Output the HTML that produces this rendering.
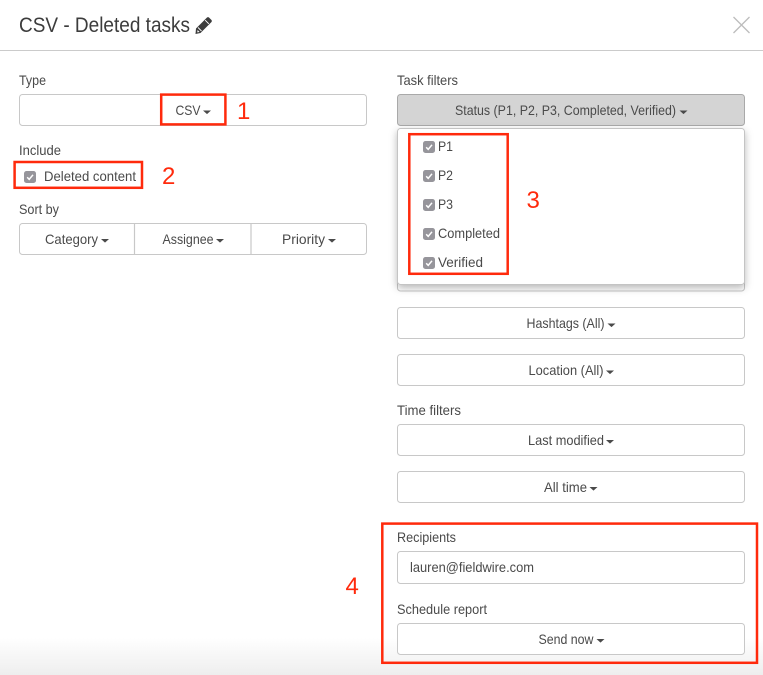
<!DOCTYPE html>
<html>
<head>
<meta charset="utf-8">
<style>
html,body{margin:0;padding:0;background:#fff}
svg{display:block}
text{font-family:"Liberation Sans",sans-serif;font-size:14px;fill:#4a4a4a}
.b{fill:#fff;stroke:#c8c8c8;stroke-width:1}
.r{fill:none;stroke:#ff2a0c;stroke-width:2.5}
.n{font-size:24px;fill:#ff2a0c}
.c{fill:#4a4a4a}
</style>
</head>
<body>
<svg width="763" height="675" viewBox="0 0 763 675" xmlns="http://www.w3.org/2000/svg">
<defs>
<linearGradient id="g" x1="0" y1="0" x2="0" y2="1"><stop offset="0" stop-color="#fff"/><stop offset="1" stop-color="#eeeeee"/></linearGradient>
<filter id="s" x="-5%" y="-5%" width="110%" height="115%"><feDropShadow dx="0" dy="3" stdDeviation="4" flood-color="#000" flood-opacity=".28"/></filter>
<g id="k"><rect x="0" y="0" width="12" height="12" rx="2.5" fill="#96959b"/><path d="M3.2 6.2 L5.2 8.4 L9 3.8" fill="none" stroke="#fff" stroke-width="1.5"/></g>
<path id="t" d="M0 0H8L4 3.6Z" class="c"/>
</defs>
<rect x="0" y="638" width="763" height="37" fill="url(#g)"/>

<!-- header -->
<text x="19" y="32" style="font-size:21px;fill:#3c3c3c" textLength="171" lengthAdjust="spacingAndGlyphs">CSV - Deleted tasks</text>
<path d="M195.5 34 L196 28.5 L207 17.5 Q208 16.8 209 17.5 L211.5 20 Q212.3 21 211.5 22 L200.5 33 Z M197.2 32.4 L199.6 32 L197.6 30 Z" fill="#3c3c3c" fill-rule="evenodd"/>
<path d="M198 27.5 L201.5 31" stroke="#fff" stroke-width=".9"/>
<path d="M205.2 20.2 L208.8 23.8" stroke="#fff" stroke-width=".9"/>
<path d="M733.5 17 L749.5 33 M749.5 17 L733.5 33" stroke="#bdbdbd" stroke-width="1.3" fill="none"/>
<rect x="0" y="50" width="763" height="1" fill="#cbcbcb"/>

<!-- left column -->
<text x="19" y="85" textLength="27" lengthAdjust="spacingAndGlyphs">Type</text>
<rect class="b" x="19.5" y="94.5" width="347" height="31" rx="3"/>
<text x="175.500" y="115" textLength="25" lengthAdjust="spacingAndGlyphs">CSV</text>
<use href="#t" x="203" y="110.500"/>
<rect class="r" x="161.200" y="94.600" width="64.200" height="29.800"/>
<text class="n" x="237" y="119">1</text>

<text x="19" y="155" textLength="42" lengthAdjust="spacingAndGlyphs">Include</text>
<rect class="r" x="14.600" y="162" width="127.400" height="25.800"/>
<use href="#k" x="24" y="171"/>
<text x="44" y="181" textLength="92" lengthAdjust="spacingAndGlyphs">Deleted content</text>
<text class="n" x="162" y="184">2</text>

<text x="19" y="214" textLength="40" lengthAdjust="spacingAndGlyphs">Sort by</text>
<rect class="b" x="19.5" y="223.5" width="347" height="31" rx="3"/>
<path d="M134.500 224V254M251 224V254" stroke="#c8c8c8" stroke-width="1.2"/>
<text x="45" y="244" textLength="53" lengthAdjust="spacingAndGlyphs">Category</text><use href="#t" x="101" y="239"/>
<text x="162.500" y="244" textLength="51" lengthAdjust="spacingAndGlyphs">Assignee</text><use href="#t" x="216" y="239"/>
<text x="282" y="244" textLength="43" lengthAdjust="spacingAndGlyphs">Priority</text><use href="#t" x="328" y="239"/>

<!-- right column -->
<text x="397" y="85" textLength="61" lengthAdjust="spacingAndGlyphs">Task filters</text>
<rect x="397.5" y="94.5" width="347" height="31" rx="3" fill="#d4d4d4" stroke="#a9a9a9"/>
<text x="455" y="115" textLength="221" lengthAdjust="spacingAndGlyphs">Status (P1, P2, P3, Completed, Verified)</text>
<use href="#t" x="679.500" y="110.500"/>

<rect class="b" x="397.5" y="140" width="347" height="151" rx="3"/>
<rect x="397.5" y="128.500" width="347" height="156" rx="3" fill="#fff" stroke="#c4c4c4" filter="url(#s)"/>
<rect class="r" x="409.300" y="134.200" width="98.400" height="139.600"/>
<use href="#k" x="423" y="141"/><text x="438" y="151" textLength="15" lengthAdjust="spacingAndGlyphs">P1</text>
<use href="#k" x="423" y="170"/><text x="438" y="180" textLength="15" lengthAdjust="spacingAndGlyphs">P2</text>
<use href="#k" x="423" y="199"/><text x="438" y="209" textLength="15" lengthAdjust="spacingAndGlyphs">P3</text>
<use href="#k" x="423" y="228"/><text x="438" y="238" textLength="62" lengthAdjust="spacingAndGlyphs">Completed</text>
<use href="#k" x="423" y="257"/><text x="438" y="267" textLength="45" lengthAdjust="spacingAndGlyphs">Verified</text>
<text class="n" x="526.500" y="208">3</text>

<rect class="b" x="397.5" y="307.5" width="347" height="31" rx="3"/>
<text x="526.500" y="328" textLength="78" lengthAdjust="spacingAndGlyphs">Hashtags (All)</text><use href="#t" x="607.500" y="323.500"/>
<rect class="b" x="397.5" y="354.5" width="347" height="31" rx="3"/>
<text x="528.500" y="375" textLength="75" lengthAdjust="spacingAndGlyphs">Location (All)</text><use href="#t" x="606" y="370.500"/>

<text x="397" y="415" textLength="64" lengthAdjust="spacingAndGlyphs">Time filters</text>
<rect class="b" x="397.5" y="424.5" width="347" height="31" rx="3"/>
<text x="528" y="445" textLength="76" lengthAdjust="spacingAndGlyphs">Last modified</text><use href="#t" x="606" y="440"/>
<rect class="b" x="397.5" y="471.5" width="347" height="31" rx="3"/>
<text x="544" y="492" textLength="43" lengthAdjust="spacingAndGlyphs">All time</text><use href="#t" x="589.500" y="487"/>

<rect class="r" x="382.300" y="523.600" width="374.700" height="139.200"/>
<text class="n" x="345.500" y="594">4</text>
<text x="397" y="542" textLength="59" lengthAdjust="spacingAndGlyphs">Recipients</text>
<rect class="b" x="397.5" y="551.5" width="347" height="32" rx="3"/>
<text x="410" y="572" textLength="124" lengthAdjust="spacingAndGlyphs">lauren@fieldwire.com</text>
<text x="397" y="614" textLength="90" lengthAdjust="spacingAndGlyphs">Schedule report</text>
<rect class="b" x="397.5" y="623.5" width="347" height="31" rx="3"/>
<text x="538.500" y="644" textLength="55" lengthAdjust="spacingAndGlyphs">Send now</text><use href="#t" x="596.500" y="639"/>
</svg>
</body>
</html>
